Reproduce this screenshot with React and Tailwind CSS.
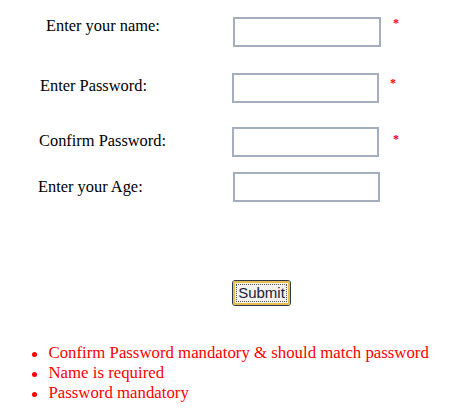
import React from "react";

function Star({ className }) {
  return (
    <span className={"text-[#ff0000] text-[12px] leading-[12px] font-bold font-['Liberation_Serif',serif] " + className}>*</span>
  );
}

function Field({ w }) {
  return (
    <input
      type="text"
      className={"h-[30px] border-2 border-[#a3afbe] bg-white outline-none " + w}
    />
  );
}

export default function App() {
  const errors = [
    "Confirm Password mandatory & should match password",
    "Name is required",
    "Password mandatory",
  ];
  return (
    <div className="w-[474px] h-[413px] bg-white overflow-hidden font-['Liberation_Serif','Times_New_Roman',serif] text-[#000] pt-[17px]">
      <div className="flex items-start h-[30px]">
        <div className="w-[233px] pl-[46px] pt-0 text-[16.4px] leading-[18px]">Enter your name:</div>
        <Field w="w-[148px]" />
        <Star className="ml-[12px] mt-0" />
      </div>
      <div className="flex items-start h-[30px] mt-[26px]">
        <div className="w-[232px] pl-[40px] pt-[4px] text-[16.4px] leading-[18px]">Enter Password:</div>
        <Field w="w-[147px]" />
        <Star className="ml-[11px] mt-[4px]" />
      </div>
      <div className="flex items-start h-[30px] mt-[24px]">
        <div className="w-[232px] pl-[39px] pt-[5px] text-[16.4px] leading-[18px]">Confirm Password:</div>
        <Field w="w-[147px]" />
        <Star className="ml-[14px] mt-[6px]" />
      </div>
      <div className="flex items-start h-[30px] mt-[15px]">
        <div className="w-[233px] pl-[38px] pt-[6px] text-[16.4px] leading-[18px]">Enter your Age:</div>
        <Field w="w-[147px]" />
      </div>
      <div className="pl-[232px] mt-[78px] h-[26px]">
        <button className="block w-[59px] h-[26px] rounded-[3px] border border-[#2c3850] p-0 bg-[#f3f2ec]">
          <div className="h-full w-full rounded-[2px] border-2 border-[#e8bd4e] flex items-center justify-center">
            <span className="border border-dotted border-[#555] px-[1px] leading-[16px] font-['Liberation_Sans',Arial,sans-serif] text-[15px] text-[#1b1b3a]">
              Submit
            </span>
          </div>
        </button>
      </div>
      <ul className="mt-[37px] text-[#ff0000] text-[16.8px] leading-[20px]">
        {errors.map((e) => (
          <li key={e} className="flex items-start">
            <div className="ml-[31.5px] mt-[9px] w-[5px] h-[5px] rounded-full bg-[#ff0000] shrink-0" />
            <span className="ml-[12px] whitespace-nowrap">{e}</span>
          </li>
        ))}
      </ul>
    </div>
  );
}
